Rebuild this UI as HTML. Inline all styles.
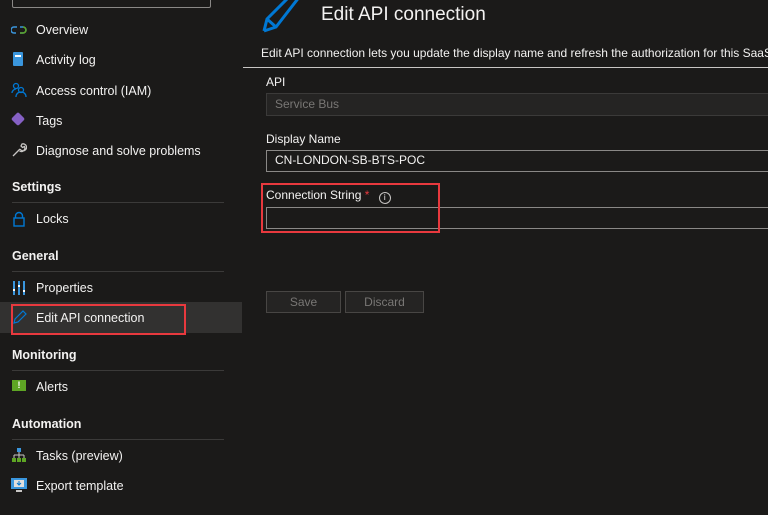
<!DOCTYPE html>
<html><head><style>
body{margin:0;width:768px;height:515px;background:#1b1a19;font-family:"Liberation Sans",sans-serif;color:#f3f2f1;position:relative;overflow:hidden}
.a{position:absolute}
.it{position:absolute;left:36px;font-size:12.5px;line-height:16px;color:#f3f2f1}
.h{position:absolute;left:12px;font-size:12.5px;font-weight:bold;color:#f3f2f1}
.dv{position:absolute;left:12px;width:212px;height:1px;background:#3b3a39}
.lb{position:absolute;left:266px;font-size:12px;color:#f3f2f1}
.in{position:absolute;left:266px;width:510px;height:21px;border:1px solid #8a8886;box-sizing:border-box;font-size:12px;line-height:19px;padding-left:8px}
.bt{position:absolute;top:291px;height:22px;border:1px solid #484644;background:#252423;color:#797775;font-size:12px;text-align:center;line-height:20px;box-sizing:border-box}
</style></head><body>
<div class="a" style="left:12px;top:-10px;width:197px;height:16px;border:1px solid #8a8886;border-radius:2px"></div>
<svg class="a" style="left:11px;top:23px" width="16" height="14"><path d="M6 4h-3a3 3 0 0 0 0 6h2M9 4h3a3 3 0 0 1 0 6h-3" stroke="#3a96dd" fill="none" stroke-width="1.5"/><path d="M9 10h3a3 3 0 0 0 0-6" stroke="#5ea524" fill="none" stroke-width="1.5"/></svg>
<div class="it" style="top:22px">Overview</div>
<div class="a" style="left:13px;top:52px;width:10px;height:14px;background:#3a96dd;border-radius:1px"><div style="margin:3px 2px;height:2px;background:#fff"></div></div>
<div class="it" style="top:52px">Activity log</div>
<svg class="a" style="left:11px;top:82px" width="16" height="16"><circle cx="5" cy="4" r="2.5" stroke="#0078d4" fill="none" stroke-width="1.3"/><circle cx="10" cy="8" r="2.5" stroke="#0078d4" fill="none" stroke-width="1.3"/><path d="M5 15c0-3 2-5 5-5s5 2 5 5M1 11c0-2 2-4 4-4" stroke="#0078d4" fill="none" stroke-width="1.3"/></svg>
<div class="it" style="top:83px">Access control (IAM)</div>
<div class="a" style="left:13px;top:114px;width:10px;height:10px;background:#8661c5;transform:rotate(45deg);border-radius:2px"></div>
<div class="it" style="top:113px">Tags</div>
<svg class="a" style="left:11px;top:142px" width="16" height="16"><path d="M2 14l7-7M9 7a3.5 3.5 0 1 0 2-5l-1 2 1.5 1.5 2-1a3.5 3.5 0 0 1-5 4.5" stroke="#c8c6c4" fill="none" stroke-width="1.3"/></svg>
<div class="it" style="top:143px">Diagnose and solve problems</div>
<div class="h" style="top:180px">Settings</div><div class="dv" style="top:202px"></div>
<svg class="a" style="left:13px;top:211px" width="12" height="16"><path d="M2.5 7V5a3.5 3.5 0 0 1 7 0v2" stroke="#0078d4" fill="none" stroke-width="1.4"/><rect x="1" y="7" width="10" height="8" stroke="#0078d4" fill="none" stroke-width="1.4"/></svg>
<div class="it" style="top:211px">Locks</div>
<div class="h" style="top:249px">General</div><div class="dv" style="top:271px"></div>
<svg class="a" style="left:13px;top:281px" width="12" height="14"><rect x="0" y="0" width="2" height="14" fill="#3a96dd"/><rect x="5" y="0" width="2" height="14" fill="#3a96dd"/><rect x="10" y="0" width="2" height="14" fill="#3a96dd"/><rect x="0" y="8" width="2" height="2" fill="#fff"/><rect x="5" y="4" width="2" height="2" fill="#fff"/><rect x="10" y="9" width="2" height="2" fill="#fff"/></svg>
<div class="it" style="top:280px">Properties</div>
<div class="a" style="left:0;top:302px;width:242px;height:31px;background:#323130"></div>
<svg class="a" style="left:13px;top:310px" width="14" height="14"><path d="M1 13l1-4 8-8 3 3-8 8z" stroke="#0078d4" fill="none" stroke-width="1.2"/></svg>
<div class="it" style="top:310px">Edit API connection</div>
<div class="a" style="left:11px;top:304px;width:175px;height:31px;border:2px solid #e8393e;box-sizing:border-box"></div>
<div class="h" style="top:348px">Monitoring</div><div class="dv" style="top:370px"></div>
<div class="a" style="left:12px;top:380px;width:14px;height:11px;background:#5ea524;color:#fff;font-size:9px;font-weight:bold;text-align:center;line-height:11px">!</div>
<div class="it" style="top:379px">Alerts</div>
<div class="h" style="top:417px">Automation</div><div class="dv" style="top:439px"></div>
<svg class="a" style="left:11px;top:448px" width="16" height="14"><rect x="6" y="0" width="4" height="4" fill="#3a96dd"/><path d="M8 4v3M3 7h10M3 7v3M13 7v3M8 7v3" stroke="#c8c6c4"/><rect x="1" y="10" width="4" height="4" fill="#5ea524"/><rect x="6" y="10" width="4" height="4" fill="#5ea524"/><rect x="11" y="10" width="4" height="4" fill="#5ea524"/></svg>
<div class="it" style="top:448px">Tasks (preview)</div>
<svg class="a" style="left:11px;top:478px" width="16" height="15"><rect x="0" y="0" width="16" height="11" fill="#3a96dd"/><rect x="3" y="2" width="10" height="7" fill="#e1dfdd"/><path d="M8 3v4M6 5l2 2 2-2" stroke="#0078d4" fill="none"/><rect x="5" y="12" width="6" height="2" fill="#c8c6c4"/></svg>
<div class="it" style="top:478px">Export template</div>

<svg class="a" style="left:260px;top:-4px" width="50" height="40"><path d="M4 35l3-12L30 0M4 35l12-4L40 0M7 23l9 8" stroke="#0078d4" fill="none" stroke-width="3"/></svg>
<div class="a" style="left:321px;top:4px;font-size:19px;color:#f3f2f1">Edit API connection</div>
<div class="a" style="left:261px;top:46px;font-size:12px;white-space:nowrap">Edit API connection lets you update the display name and refresh the authorization for this SaaS</div>
<div class="a" style="left:243px;top:67px;width:525px;height:1px;background:#c8c6c4"></div>
<div class="lb" style="top:75px">API</div>
<div class="in" style="top:93px;height:23px;background:#252423;border-color:#3b3a39;color:#797775;line-height:21px">Service Bus</div>
<div class="lb" style="top:132px">Display Name</div>
<div class="in" style="top:150px;height:22px">CN-LONDON-SB-BTS-POC</div>
<div class="lb" style="top:188px">Connection String <span style="color:#e8393e">*</span> <span style="display:inline-block;width:10px;height:10px;border:1px solid #c8c6c4;border-radius:50%;font-size:8px;text-align:center;line-height:10px;margin-left:6px;vertical-align:-1px">i</span></div>
<div class="in" style="top:207px;height:22px"></div>
<div class="a" style="left:261px;top:183px;width:179px;height:50px;border:2px solid #e8393e;box-sizing:border-box"></div>
<div class="bt" style="left:266px;width:75px">Save</div>
<div class="bt" style="left:345px;width:79px">Discard</div>
</body></html>
